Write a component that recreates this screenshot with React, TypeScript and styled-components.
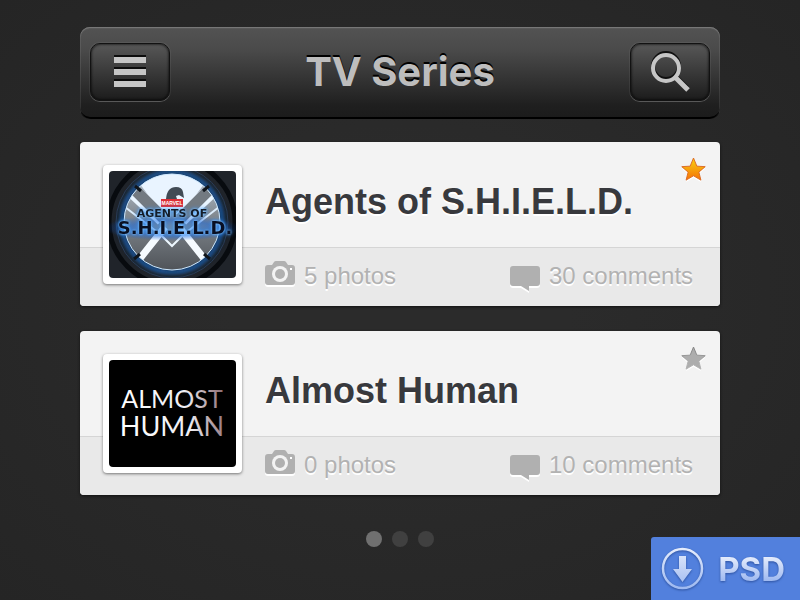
import React from "react";
import styled, { createGlobalStyle } from "styled-components";

const GlobalStyle = createGlobalStyle`
  * { box-sizing: border-box; }
  body {
    margin: 0;
    background: #282828;
    font-family: "Liberation Sans", Arial, sans-serif;
  }
  button { font: inherit; cursor: pointer; }
`;

const Page = styled.div`
  display: flex;
  flex-direction: column;
  align-items: center;
  min-height: 100vh;
  padding: 27px 80px 53px;
  background: radial-gradient(ellipse at center, #2b2b2b 30%, #252525 100%);
`;

const Header = styled.header`
  display: flex;
  align-items: center;
  justify-content: space-between;
  width: 100%;
  height: 92px;
  padding: 0 10px 2px;
  border-radius: 10px;
  background: linear-gradient(#535353, #4a4a4a 25%, #1f1f1f 85%, #1b1b1b);
  box-shadow: inset 0 1px 0 #777, inset 0 2px 1px #5a5a5a, inset 1px 0 0 rgba(255, 255, 255, 0.08),
    inset -1px 0 0 rgba(255, 255, 255, 0.08), inset 0 -2px 0 #000;
`;

const ToolButton = styled.button`
  display: grid;
  place-items: center;
  width: 80px;
  height: 58px;
  padding: 0;
  border: 1px solid #121212;
  border-radius: 10px;
  background: linear-gradient(#575757, #1c1c1c);
  box-shadow: inset 0 0 3px #000, 0 1px 0 rgba(255, 255, 255, 0.2), 0 0 0 1px rgba(255, 255, 255, 0.06);
`;

const HeaderTitle = styled.h1`
  margin: 0;
  color: #bdbdbd;
  font: 700 40px/50px Inter, sans-serif;
  text-shadow: 0 -2px 0 #000;
`;

const SeriesList = styled.main`
  display: flex;
  flex-direction: column;
  gap: 25px;
  width: 100%;
  margin-top: 23px;
`;

const Card = styled.article`
  display: grid;
  grid-template-columns: 185px 1fr 40px;
  grid-template-rows: 105px 59px;
  border-radius: 4px;
  background: #f3f3f3;
  box-shadow: 0 1px 3px #111;
  overflow: hidden;
`;

const Thumb = styled.div`
  grid-area: 1 / 1 / 3 / 2;
  z-index: 1;
  justify-self: start;
  align-self: start;
  margin: 23px 0 0 23px;
  padding: 6px;
  border-radius: 4px;
  background: #fff;
  box-shadow: 0 1px 3px rgba(0, 0, 0, 0.5);
  svg { display: block; border-radius: 4px; }
`;

const SeriesTitle = styled.h2`
  grid-area: 1 / 2 / 2 / 3;
  align-self: center;
  margin: 14px 0 0;
  color: #38393d;
  font-size: 36px;
  font-weight: 700;
  line-height: 44px;
  white-space: nowrap;
  text-shadow: 0 2px 0 #fff;
`;

const StarButton = styled.button`
  grid-area: 1 / 3 / 2 / 4;
  align-self: start;
  justify-self: start;
  margin: 15px 0 0 1px;
  padding: 0;
  border: 0;
  background: none;
  line-height: 0;
`;

const MetaBar = styled.footer`
  grid-area: 2 / 1 / 3 / 4;
  display: flex;
  align-items: center;
  justify-content: space-between;
  padding: 0 25px 2px 185px;
  border-top: 1px solid #d5d5d5;
  background: #e9e9e9;
`;

const MetaLink = styled.a`
  display: flex;
  align-items: center;
  gap: 9px;
  color: #b2b2b2;
  font-size: 24px;
  line-height: 28px;
  text-decoration: none;
  text-shadow: 0 2px 0 #fff;
  svg { filter: drop-shadow(0 2px 0 #fff); }
  &:last-child { min-width: 185px; }
`;

const Pager = styled.nav`
  display: flex;
  gap: 10px;
  margin-top: 36px;
`;

const Dot = styled.button<{ $active?: boolean }>`
  width: 16px;
  height: 16px;
  padding: 0;
  border: 0;
  border-radius: 50%;
  background: ${(p) => (p.$active ? "#707070" : "#404040")};
`;

const Download = styled.a`
  position: fixed;
  right: 0;
  bottom: 0;
  display: flex;
  align-items: center;
  gap: 14px;
  height: 63px;
  padding: 0 15px 0 10px;
  border-radius: 3px 0 0 0;
  background: #5280dd;
  text-decoration: none;
  svg, span { filter: drop-shadow(0 1px 1px rgba(20, 50, 120, 0.6)); }
`;

const DownloadText = styled.span`
  background: linear-gradient(#e6edfc 20%, #9db8f0 80%);
  background-clip: text;
  color: transparent;
  font: 700 33px/42px Inter, sans-serif;
`;

const MenuIcon = () => (
  <svg width="32" height="34" viewBox="0 0 32 34" aria-hidden="true">
    <path d="M0 0h32v6H0zM0 12h32v6H0zM0 24h32v6H0z" fill="#0d0d0d" />
    <path d="M0 2h32v6H0zM0 14h32v6H0zM0 26h32v6H0z" fill="#c6c6c6" />
  </svg>
);

const SearchIcon = () => (
  <svg width="42" height="42" viewBox="0 0 42 42" fill="none" strokeWidth="4" aria-hidden="true">
    <g stroke="#101010">
      <circle cx="17" cy="15" r="13" />
      <path d="M25 24l13 13" strokeWidth="5" />
    </g>
    <g stroke="#c6c6c6">
      <circle cx="17" cy="17" r="13" />
      <path d="M26 26l13 13" strokeWidth="5" />
    </g>
  </svg>
);

const CameraIcon = () => (
  <svg width="30" height="30" viewBox="0 0 30 30" aria-hidden="true">
    <path
      fill="#b0b0b0"
      fillRule="evenodd"
      d="M3 4h4l2-3q.6-1 2-1h8q1.400 0 2 1l2 3h4q3 0 3 3v14q0 3-3 3H3q-3 0-3-3V7q0-3 3-3zM25 7v2h2V7z"
    />
    <circle cx="15" cy="13" r="8" fill="#f3f3f3" />
    <circle cx="15" cy="13" r="5" fill="#b0b0b0" />
  </svg>
);

const CommentIcon = () => (
  <svg width="30" height="29" viewBox="0 -4 30 29" aria-hidden="true">
    <path fill="#b0b0b0" d="M3 0h24q3 0 3 3v14q0 3-3 3h-8v5l-8-5H3q-3 0-3-3V3q0-3 3-3z" />
  </svg>
);

const starPath = "M13 1l3.500 8.500 8.700.5-6.600 5.700 2.100 8.300-7.700-4.500L5.300 24l2.100-8.300L.8 10l8.700-.5z";

const StarIcon = ({ active }: { active?: boolean }) => (
  <svg width="25" height="27" viewBox="0 0 26 28" aria-hidden="true">
    <defs>
      <linearGradient id="starGold" x2="0" y2="1">
        <stop offset=".1" stopColor="#f8c811" />
        <stop offset=".9" stopColor="#f67b08" />
      </linearGradient>
      <linearGradient id="starGrey" x2="0" y2="1">
        <stop offset=".25" stopColor="#858585" />
        <stop offset=".65" stopColor="#b2b2b2" />
      </linearGradient>
    </defs>
    <path d={starPath} transform="translate(0 2)" fill="#fff" />
    <path
      d={starPath}
      fill={active ? "url(#starGold)" : "#adadad"}
      stroke={active ? "#dc6a24" : "url(#starGrey)"}
      strokeWidth="1"
    />
  </svg>
);

const ShieldLettering = styled.g`
  text-anchor: middle;
  font-family: "DejaVu Sans", sans-serif;
  filter: drop-shadow(0 0 1px #9ed4ff) drop-shadow(0 0 2px #2f93ff);
`;

const ShieldArt = () => (
  <svg width="127" height="107" viewBox="0 0 127 107" role="img" aria-label="Agents of S.H.I.E.L.D.">
    <defs>
      <radialGradient id="backdrop">
        <stop offset=".6" stopColor="#101a28" />
        <stop offset="1" stopColor="#20242a" />
      </radialGradient>
      <linearGradient id="steel" x2="0" y2="1">
        <stop stopColor="#b9c7d6" />
        <stop offset=".4" stopColor="#868d94" />
        <stop offset="1" stopColor="#505459" />
      </linearGradient>
      <radialGradient id="flare">
        <stop stopColor="#4aa2ff" stopOpacity=".3" />
        <stop offset=".6" stopColor="#176ae5" stopOpacity=".5" />
        <stop offset="1" stopColor="#0750cc" stopOpacity="0" />
      </radialGradient>
      <clipPath id="disc"><circle cx="63" cy="51" r="48" /></clipPath>
      <filter id="soft" x="-30%" y="-30%" width="160%" height="160%"><feGaussianBlur stdDeviation="2" /></filter>
      <filter id="edge" x="-10%" y="-10%" width="120%" height="120%"><feGaussianBlur stdDeviation=".6" /></filter>
    </defs>
    <rect width="127" height="107" fill="url(#backdrop)" />
    <g fill="none">
      <circle cx="63" cy="51" r="63" stroke="#080b0f" strokeWidth="5" />
      <circle cx="63" cy="51" r="56" stroke="#2a3c55" strokeWidth="1" />
      <circle cx="63" cy="51" r="50" stroke="#1e6fd0" strokeWidth="3" filter="url(#soft)" />
    </g>
    <circle cx="63" cy="51" r="48" fill="url(#steel)" />
    <g clipPath="url(#disc)" filter="url(#edge)">
      <path d="M31 13Q63-8 95 13L76 39H50z" fill="#e9f4ff" />
      <path d="M24 20L54 48M102 20L72 48" stroke="#eaf5ff" strokeWidth="15" />
      <path d="M24 17L55 48M102 17L71 48" stroke="#737a81" strokeWidth="11" />
      <path d="M16 36l36 28M110 36L74 64" stroke="#dcecfb" strokeWidth="2" />
      <path d="M56 56L29 90M70 56l27 34" stroke="#f6fbff" strokeWidth="7" />
      <path d="M52 64l11 11 11-11" fill="#777d83" stroke="#eef8ff" strokeWidth="2" />
    </g>
    <circle cx="63" cy="51" r="48" fill="none" stroke="#cde8ff" strokeWidth="1" />
    <path d="M57 28q1-12 10-12 6 0 7 5l1 6-5-3-3 1 1 3z" fill="#414b55" />
    <path d="M26 15l6 5M100 15l-6 5M25 88l6-5M101 88l-6-5" stroke="#10151b" strokeWidth="3" />
    <ellipse cx="63" cy="57" rx="68" ry="13" fill="url(#flare)" />
    <rect x="52" y="28" width="22" height="8" fill="#dc3038" />
    <text x="63" y="34" textAnchor="middle" fill="#fff" fontFamily="Liberation Sans" fontWeight="700" fontSize="5">MARVEL</text>
    <ShieldLettering>
      <text x="63" y="46" fontSize="11" fontWeight="700" fill="#141d2a">AGENTS OF</text>
      <text x="66" y="63" fontSize="18" fontWeight="700" fill="#080f23">S.H.I.E.L.D.</text>
    </ShieldLettering>
  </svg>
);

const HumanArt = () => (
  <svg width="127" height="107" viewBox="0 0 127 107" role="img" aria-label="Almost Human">
    <defs>
      <linearGradient id="chrome" gradientUnits="userSpaceOnUse" x1="14" y1="60" x2="114" y2="45">
        <stop stopColor="#fff" />
        <stop offset=".65" stopColor="#ededf2" />
        <stop offset="1" stopColor="#927379" />
      </linearGradient>
    </defs>
    <rect width="127" height="107" fill="#000" />
    <g fill="url(#chrome)" textAnchor="middle" fontFamily="Lato, sans-serif">
      <text x="63" y="48" fontSize="25">ALMOST</text>
      <text x="63" y="76" fontSize="27">HUMAN</text>
    </g>
  </svg>
);

const DownloadIcon = () => (
  <svg width="43" height="43" viewBox="0 0 43 43" aria-hidden="true">
    <defs>
      <linearGradient id="ice" gradientUnits="userSpaceOnUse" x1="0" y1="1" x2="0" y2="42">
        <stop stopColor="#e6edfc" />
        <stop offset="1" stopColor="#9db8f0" />
      </linearGradient>
    </defs>
    <circle cx="21.500" cy="21.500" r="19.500" fill="none" stroke="url(#ice)" strokeWidth="2.500" />
    <path d="M18 9h7v13h6l-9.500 13L12 22h6z" fill="url(#ice)" />
  </svg>
);

const series = [
  { title: "Agents of S.H.I.E.L.D.", photos: 5, comments: 30, starred: true, Art: ShieldArt },
  { title: "Almost Human", photos: 0, comments: 10, starred: false, Art: HumanArt },
];

export default function App() {
  return (
    <>
      <GlobalStyle />
      <Page>
        <Header>
          <ToolButton aria-label="Menu"><MenuIcon /></ToolButton>
          <HeaderTitle>TV Series</HeaderTitle>
          <ToolButton aria-label="Search"><SearchIcon /></ToolButton>
        </Header>
        <SeriesList>
          {series.map(({ title, photos, comments, starred, Art }) => (
            <Card key={title}>
              <Thumb><Art /></Thumb>
              <SeriesTitle>{title}</SeriesTitle>
              <StarButton aria-label={`Favourite ${title}`} aria-pressed={starred}>
                <StarIcon active={starred} />
              </StarButton>
              <MetaBar>
                <MetaLink href="#photos"><CameraIcon />{photos} photos</MetaLink>
                <MetaLink href="#comments"><CommentIcon />{comments} comments</MetaLink>
              </MetaBar>
            </Card>
          ))}
        </SeriesList>
        <Pager aria-label="Pages">
          <Dot $active aria-label="Page 1" />
          <Dot aria-label="Page 2" />
          <Dot aria-label="Page 3" />
        </Pager>
      </Page>
      <Download href="#psd">
        <DownloadIcon />
        <DownloadText>PSD</DownloadText>
      </Download>
    </>
  );
}
